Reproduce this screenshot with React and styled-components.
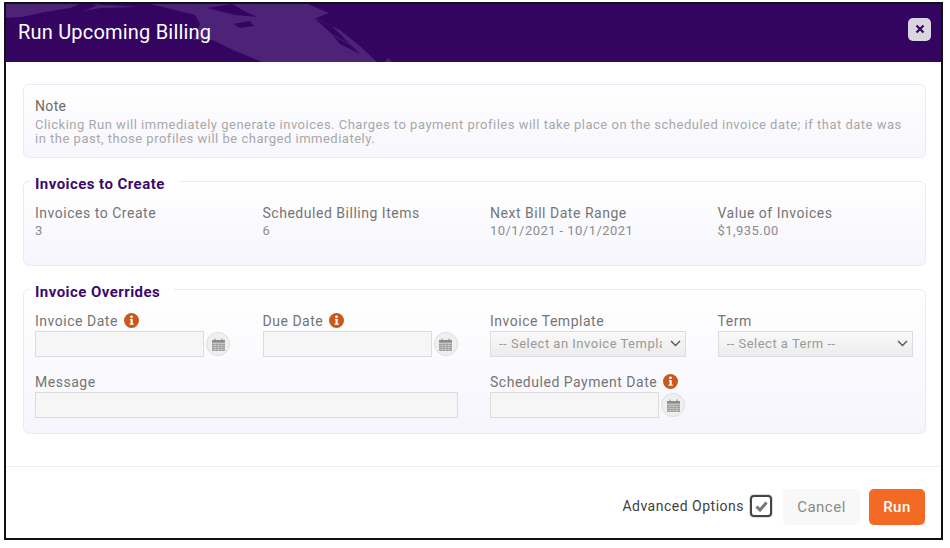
import React from 'react';
import styled, { createGlobalStyle } from 'styled-components';

const GlobalStyle = createGlobalStyle`
  html, body {
    margin: 0;
    padding: 0;
    background: #fff;
  }
  body {
    font-family: Roboto, "Liberation Sans", sans-serif;
  }
  * {
    box-sizing: border-box;
  }
`;

const Frame = styled.div`
  width: 939px;
  height: 538px;
  margin: 2px 0 0 4px;
  border: 2px solid #111;
  display: flex;
  flex-direction: column;
  background: #fff;
`;

const Header = styled.header`
  position: relative;
  height: 58px;
  flex: none;
  display: flex;
  align-items: center;
  justify-content: space-between;
  padding: 0 10px 3px 12px;
  background: #330460;
  overflow: hidden;
`;

const HeaderArt = styled.svg`
  position: absolute;
  left: 0;
  top: 0;
  width: 420px;
  height: 58px;
`;

const Title = styled.h1`
  position: relative;
  margin: 0;
  font-size: 20px;
  font-weight: 400;
  letter-spacing: 0.2px;
  color: #fff;
`;

const CloseButton = styled.button`
  position: relative;
  width: 23px;
  height: 23px;
  margin-top: -5px;
  padding: 0;
  display: flex;
  align-items: center;
  justify-content: center;
  border: none;
  border-radius: 5px;
  background: #d9d6e0;
`;

const Body = styled.div`
  flex: 1;
  padding: 22px 15px 0 17px;
  display: flex;
  flex-direction: column;
`;

const NotePanel = styled.div`
  height: 74px;
  padding: 13px 20px 0 11px;
  border: 1px solid #ebe9f8;
  border-radius: 6px;
  background: linear-gradient(#fff, #f7f6fd);
`;

const NoteTitle = styled.div`
  font-size: 14px;
  line-height: 16px;
  letter-spacing: 0.35px;
  color: #6b6b6b;
`;

const NoteText = styled.div`
  margin-top: 4px;
  font-size: 13px;
  line-height: 14px;
  letter-spacing: 0.5px;
  color: #a8a8a8;
`;

const Section = styled.fieldset`
  margin: ${(p) => p.$top}px 0 0;
  height: ${(p) => p.$height}px;
  padding: 0 11px;
  min-width: 0;
  border: 1px solid #ebe9f8;
  border-radius: 6px;
  background: linear-gradient(#fff, #f6f5fd);
`;

const Legend = styled.legend`
  margin-left: -5px;
  padding: 6px 14px 0 5px;
  font-size: 15px;
  line-height: 16px;
  font-weight: 700;
  letter-spacing: 0.45px;
  color: #3a0a6e;
`;

const Grid = styled.div`
  display: grid;
  grid-template-columns: repeat(4, 195.5px);
  column-gap: 32px;
  row-gap: ${(p) => p.$rowGap || 0}px;
  margin-top: 13px;
`;

const Field = styled.div`
  grid-column: span ${(p) => p.$span || 1};
  min-width: 0;
`;

const Label = styled.div`
  display: flex;
  align-items: center;
  gap: 6px;
  height: 16px;
  font-size: 14px;
  letter-spacing: 0.52px;
  white-space: nowrap;
  color: #757575;
`;

const Value = styled.div`
  margin-top: 3px;
  font-size: 13px;
  line-height: 14px;
  letter-spacing: 0.45px;
  color: #8c8c8c;
`;

const InputRow = styled.div`
  display: flex;
  align-items: center;
  gap: 2px;
  margin-top: 2px;
`;

const TextInput = styled.div`
  width: ${(p) => p.$width || '100%'};
  height: 26px;
  flex: none;
  border: 1px solid #dcdcdc;
  background: #f6f6f6;
`;

const CalendarButton = styled.button`
  width: 24px;
  height: 24px;
  padding: 0;
  display: flex;
  align-items: center;
  justify-content: center;
  border: 1px solid #dedede;
  border-radius: 50%;
  background: #efefef;
`;

const SelectBox = styled.div`
  width: ${(p) => p.$width}px;
  height: 26px;
  margin-top: 2px;
  padding: 0 4px 2px 8px;
  display: flex;
  align-items: center;
  justify-content: space-between;
  border: 1px solid #dcdcdc;
  background: linear-gradient(#f9f9f9, #ececec);
`;

const SelectText = styled.span`
  width: 163px;
  overflow: hidden;
  white-space: nowrap;
  font-size: 13px;
  letter-spacing: 0.5px;
  color: #9a9a9a;
`;

const Footer = styled.footer`
  height: 72px;
  flex: none;
  margin-top: auto;
  padding: 22px 16px 0 0;
  display: flex;
  align-items: flex-start;
  justify-content: flex-end;
  border-top: 1px solid #efefef;
`;

const OptionLabel = styled.span`
  height: 33px;
  display: flex;
  align-items: center;
  margin-right: 6px;
  font-size: 14px;
  letter-spacing: 0.5px;
  color: #3f3f3f;
`;

const CheckBox = styled.span`
  width: 22px;
  height: 22px;
  margin: 6px 11px 0 0;
  display: flex;
  align-items: center;
  justify-content: center;
  border: 2px solid #444;
  border-radius: 4px;
  background: #fff;
  box-shadow: 0 0 0 1px #dcdcdc;
`;

const Button = styled.button`
  height: 36px;
  width: ${(p) => p.$width}px;
  margin-left: ${(p) => p.$left || 0}px;
  padding: 0;
  border: none;
  border-radius: 5px;
  font-family: inherit;
  font-size: 15px;
  font-weight: ${(p) => (p.$primary ? 500 : 400)};
  letter-spacing: 0.5px;
  color: ${(p) => (p.$primary ? '#fff' : '#8a8a8a')};
  background: ${(p) => (p.$primary ? '#f26a24' : '#f8f8f8')};
`;

function InfoIcon() {
  return (
    <svg width="15" height="15" viewBox="0 0 15 15" style={{ marginTop: -2 }}>
      <circle cx="7.5" cy="7.5" r="7.5" fill="#c9581c" />
      <circle cx="7.5" cy="3.8" r="1.4" fill="#fff" />
      <path d="M5.9 6h2.8v4.6h1v1.2H5.6v-1.2h1V7.2h-.7z" fill="#fff" />
    </svg>
  );
}

function CalendarIcon() {
  return (
    <svg width="13" height="13" viewBox="0 0 13 13">
      <path d="M0 2h2.5V.5h1V2h6V.5h1V2H13v2.8H0z" fill="#8d8d8d" />
      <path d="M0 5.5h13V13H0z" fill="#9b9b9b" />
      <path
        d="M0 7.5h13M0 9.5h13M0 11.5h13M3.2 5.5V13M6.5 5.5V13M9.8 5.5V13"
        stroke="#d2d2d2"
        strokeWidth="0.6"
      />
    </svg>
  );
}

function Chevron() {
  return (
    <svg width="11" height="7" viewBox="0 0 11 7" fill="none">
      <path d="M1 1l4.5 4.5L10 1" stroke="#555" strokeWidth="1.4" />
    </svg>
  );
}

function DateInput() {
  return (
    <InputRow>
      <TextInput $width="169px" />
      <CalendarButton type="button">
        <CalendarIcon />
      </CalendarButton>
    </InputRow>
  );
}

export default function App() {
  return (
    <>
      <GlobalStyle />
      <Frame>
        <Header>
          {/* world map streaks behind the title, coords are page pixels */}
          <HeaderArt viewBox="6 4 420 58">
            <path
              d="M6 4H80L70 8 45 12 22 17 6 18zM92 4H150L175 10 195 15 200 24 193 40 213 40 233 50 262 62H377L360 46 340 30 316 18 329 13 308 4H235L100 4 84 11 100 8 140 7z"
              fill="#4d2377"
            />
            <path d="M207 8L232 4 248 13 258 17 235 15z" fill="#330460" />
            <path d="M233 24L250 21 254 26 240 28z" fill="#330460" />
            <path d="M314 18L332 26 350 44 333 35z" fill="#330460" />
            <path d="M333 36L352 46 360 54 340 44z" fill="#330460" />
            <path d="M388 58L392 62H385z" fill="#4d2377" />
          </HeaderArt>
          <Title>Run Upcoming Billing</Title>
          <CloseButton type="button" aria-label="Close">
            <svg width="10" height="10" viewBox="0 0 10 10">
              <path d="M1.5 1.5l7 7M8.5 1.5l-7 7" stroke="#330460" strokeWidth="2.2" />
            </svg>
          </CloseButton>
        </Header>
        <Body>
          <NotePanel>
            <NoteTitle>Note</NoteTitle>
            <NoteText>
              Clicking Run will immediately generate invoices. Charges to payment profiles will take
              place on the scheduled invoice date; if that date was in the past, those profiles will
              be charged immediately.
            </NoteText>
          </NotePanel>

          <Section $top={12} $height={96}>
            <Legend>Invoices to Create</Legend>
            <Grid>
              <Field>
                <Label>Invoices to Create</Label>
                <Value>3</Value>
              </Field>
              <Field>
                <Label>Scheduled Billing Items</Label>
                <Value>6</Value>
              </Field>
              <Field>
                <Label>Next Bill Date Range</Label>
                <Value>10/1/2021 - 10/1/2021</Value>
              </Field>
              <Field>
                <Label>Value of Invoices</Label>
                <Value>$1,935.00</Value>
              </Field>
            </Grid>
          </Section>

          <Section $top={12} $height={156}>
            <Legend>Invoice Overrides</Legend>
            <Grid $rowGap={17}>
              <Field>
                <Label>
                  Invoice Date <InfoIcon />
                </Label>
                <DateInput />
              </Field>
              <Field>
                <Label>
                  Due Date <InfoIcon />
                </Label>
                <DateInput />
              </Field>
              <Field>
                <Label>Invoice Template</Label>
                <SelectBox $width={196}>
                  <SelectText>-- Select an Invoice Template --</SelectText>
                  <Chevron />
                </SelectBox>
              </Field>
              <Field>
                <Label>Term</Label>
                <SelectBox $width={195}>
                  <SelectText>-- Select a Term --</SelectText>
                  <Chevron />
                </SelectBox>
              </Field>
              <Field $span={2}>
                <Label>Message</Label>
                <InputRow>
                  <TextInput />
                </InputRow>
              </Field>
              <Field $span={2}>
                <Label>
                  Scheduled Payment Date <InfoIcon />
                </Label>
                <DateInput />
              </Field>
            </Grid>
          </Section>
        </Body>
        <Footer>
          <OptionLabel>Advanced Options</OptionLabel>
          <CheckBox>
            <svg width="13" height="11" viewBox="0 0 13 11" fill="none">
              <path d="M1.5 5.5l3.5 3.5L11.5 1.5" stroke="#777" strokeWidth="3" />
            </svg>
          </CheckBox>
          <Button type="button" $width={77}>
            Cancel
          </Button>
          <Button type="button" $primary $width={56} $left={9}>
            Run
          </Button>
        </Footer>
      </Frame>
    </>
  );
}
